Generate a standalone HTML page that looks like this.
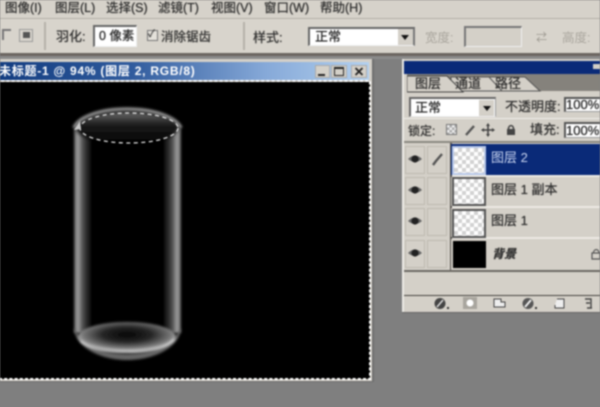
<!DOCTYPE html>
<html><head><meta charset="utf-8">
<style>
html,body{margin:0;padding:0}
body{width:600px;height:407px;overflow:hidden;position:relative;background:#7f7f7f;font-family:"Liberation Sans","Noto Sans CJK SC",sans-serif;}
#w{position:absolute;left:0;top:0;width:600px;height:407px;filter:blur(.7px);overflow:hidden}
.a{position:absolute}
.t{position:absolute;white-space:nowrap;color:#2e2e2e;font-size:12.5px;line-height:14px;text-shadow:0 0 1px rgba(0,0,0,.55)}
.in{position:absolute;background:#fff;border:1px solid #555;border-right-color:#ddd;border-bottom-color:#ddd;box-sizing:border-box}
.thumb{position:absolute;left:452px;width:34px;height:29px;box-sizing:border-box;border:2px solid #555;background-color:#fff;background-image:linear-gradient(45deg,#d2d2d2 25%,transparent 25%,transparent 75%,#d2d2d2 75%),linear-gradient(45deg,#d2d2d2 25%,transparent 25%,transparent 75%,#d2d2d2 75%);background-size:8px 8px;background-position:0 0,4px 4px}
.cell{position:absolute;width:20px;height:28px;background:#d4d0c8;border:1px solid #bdb9b0;box-sizing:border-box}
.row{position:absolute;left:451px;width:149px;background:#d4d0c8}
</style></head><body><div id="w">
<!-- top -->
<div class="a" style="left:0;top:0;width:600px;height:18px;background:#d6d2ca"></div>
<div class="a" style="left:0;top:18px;width:600px;height:1px;background:#b5b1a9"></div>
<div class="a" style="left:0;top:19px;width:600px;height:34px;background:#d8d4cc"></div>
<div class="a" style="left:0;top:53px;width:600px;height:3px;background:#6b6560"></div>
<div class="a" style="left:0;top:56px;width:600px;height:3px;background:#8a8a8a"></div>

<div class="t" style="left:5px;top:1px">图像(I)</div>
<div class="t" style="left:55px;top:1px">图层(L)</div>
<div class="t" style="left:106px;top:1px">选择(S)</div>
<div class="t" style="left:158px;top:1px">滤镜(T)</div>
<div class="t" style="left:211px;top:1px">视图(V)</div>
<div class="t" style="left:264px;top:1px">窗口(W)</div>
<div class="t" style="left:320px;top:1px">帮助(H)</div>

<!-- toolbar -->
<div class="a" style="left:2px;top:29px;width:9px;height:11px;border-left:2px solid #777;border-top:2px solid #777;box-sizing:border-box"></div>
<div class="a" style="left:19px;top:29px;width:14px;height:13px;border:1px solid #999;box-sizing:border-box"></div>
<div class="a" style="left:23px;top:32px;width:7px;height:6px;background:#555"></div>
<div class="a" style="left:44px;top:22px;width:2px;height:28px;background:#b5b1a9"></div>
<div class="t" style="left:56px;top:30px;font-size:13px">羽化:</div>
<div class="in" style="left:93px;top:25px;width:44px;height:22px;border-width:2px 1px 1px 2px;border-color:#666 #eee #eee #666"></div>
<div class="t" style="left:99px;top:29px;color:#222">0 像素</div>
<div class="a" style="left:147px;top:30px;width:11px;height:11px;border:1px solid #777;background:#e4e1da;box-sizing:border-box"></div>
<div class="t" style="left:148px;top:28px;font-size:10px;color:#333">✓</div>
<div class="t" style="left:161px;top:30px">消除锯齿</div>
<div class="a" style="left:243px;top:22px;width:2px;height:28px;background:#b5b1a9"></div>
<div class="t" style="left:253px;top:31px;font-size:13px">样式:</div>
<div class="in" style="left:308px;top:27px;width:107px;height:19px;border-width:2px 2px 1px 2px;border-color:#666 #777 #eee #666"></div>
<div class="t" style="left:315px;top:30px;color:#222;font-size:13px">正常</div>
<div class="a" style="left:398px;top:29px;width:15px;height:16px;background:#d4d0c8"></div>
<div class="a" style="left:401px;top:35px;width:0;height:0;border:4px solid transparent;border-top:5px solid #111;border-bottom:0"></div>
<div class="t" style="left:425px;top:31px;color:#aaa69e;text-shadow:none">宽度:</div>
<div class="a" style="left:464px;top:26px;width:58px;height:21px;box-sizing:border-box;border:1px solid #999;border-left:2px solid #777;border-top:2px solid #777;border-right-color:#eee;border-bottom-color:#eee;background:#d4d0c8"></div>
<div class="t" style="left:536px;top:31px;color:#9a968e;font-size:11px;text-shadow:none">⇄</div>
<div class="t" style="left:562px;top:31px;color:#aaa69e;text-shadow:none">高度:</div>

<!-- document window -->
<div class="a" style="left:0;top:59px;width:372px;height:321px;background:#d4d0c8"></div>
<div class="a" style="left:372px;top:59px;width:2px;height:323px;background:#6f6f6f"></div>
<div class="a" style="left:0;top:380px;width:374px;height:2px;background:#6f6f6f"></div>
<div class="a" style="left:0;top:62px;width:369px;height:19px;background:linear-gradient(90deg,#123c80 0,#2f5a9c 35%,#86a9d8 72%,#b3d0ee 100%)"></div>
<div class="t" style="left:-1px;top:64px;color:#fff;font-size:12px;font-weight:bold;letter-spacing:.75px;text-shadow:none">未标题-1 @ 94% (图层 2, RGB/8)</div>
<div class="a" style="left:315px;top:65px;width:15px;height:13px;background:#d4d0c8;border:1px solid #aaa;box-sizing:border-box"></div>
<div class="a" style="left:318px;top:74px;width:7px;height:2px;background:#222"></div>
<div class="a" style="left:331px;top:65px;width:16px;height:13px;background:#d4d0c8;border:1px solid #aaa;box-sizing:border-box"></div>
<div class="a" style="left:334px;top:67px;width:10px;height:9px;border:1px solid #222;border-top-width:2px;box-sizing:border-box"></div>
<div class="a" style="left:351px;top:65px;width:16px;height:13px;background:#d4d0c8;border:1px solid #aaa;box-sizing:border-box"></div>
<svg class="a" style="left:354px;top:67px" width="10" height="9"><path d="M1.5 1 L8.5 8 M8.5 1 L1.5 8" stroke="#222" stroke-width="1.8"/></svg>

<!-- canvas -->
<svg class="a" style="left:0;top:80px" width="372" height="301" viewBox="0 80 372 301">
<defs>
<filter id="b1" x="-50%" y="-50%" width="200%" height="200%"><feGaussianBlur stdDeviation="1"/></filter>
<filter id="b2" x="-50%" y="-50%" width="200%" height="200%"><feGaussianBlur stdDeviation="2.5"/></filter>
<filter id="b3" x="-50%" y="-50%" width="200%" height="200%"><feGaussianBlur stdDeviation="1.6"/></filter>
<radialGradient id="bot" cx=".5" cy=".42" r=".56"><stop offset="0" stop-color="#050505"/><stop offset=".45" stop-color="#262626"/><stop offset=".8" stop-color="#777"/><stop offset="1" stop-color="#c8c8c8"/></radialGradient>
<linearGradient id="wallL" x1="0" x2="1"><stop offset="0" stop-color="#555"/><stop offset=".2" stop-color="#a0a0a0"/><stop offset=".5" stop-color="#4a4a4a"/><stop offset="1" stop-color="#000"/></linearGradient>
<linearGradient id="wallR" x1="1" x2="0"><stop offset="0" stop-color="#555"/><stop offset=".2" stop-color="#a0a0a0"/><stop offset=".5" stop-color="#4a4a4a"/><stop offset="1" stop-color="#000"/></linearGradient>
<linearGradient id="inner" x1="0" x2="0" y1="0" y2="1"><stop offset="0" stop-color="#6a6a6a"/><stop offset=".4" stop-color="#1c1c1c"/><stop offset="1" stop-color="#000"/></linearGradient>
</defs>
<rect x="0" y="80" width="372" height="301" fill="#d4d0c8"/>
<rect x="0" y="82" width="370" height="297" fill="#000"/>
<!-- walls -->
<rect x="74" y="128" width="18" height="205" fill="url(#wallL)" filter="url(#b1)"/>
<rect x="163" y="128" width="18" height="205" fill="url(#wallR)" filter="url(#b1)"/>
<!-- bottom -->
<path d="M74 328 C75 347 100 360 127 360 C155 360 180 347 181 328 L177 334 C170 347 150 354 127 354 C104 354 84 347 78 334 Z" fill="#666" filter="url(#b1)"/>
<ellipse cx="127" cy="337" rx="49" ry="15" fill="url(#bot)" filter="url(#b1)"/>
<path d="M81 341 C90 350 108 352 127 352 C148 352 166 349 174 339" stroke="#ddd" stroke-width="1.5" fill="none" filter="url(#b1)"/>
<!-- top -->
<ellipse cx="127" cy="128" rx="51" ry="16" fill="url(#inner)" filter="url(#b3)"/>
<path d="M74 128 C78 117 100 109 127 109 C154 109 176 117 181 128" stroke="#8a8a8a" stroke-width="3.5" fill="none" filter="url(#b1)"/>
<ellipse cx="129" cy="128" rx="49" ry="15" fill="none" stroke="#e0e0e0" stroke-width="1.3" stroke-dasharray="4 3.5"/>
<path d="M74 130 L80 121 L81 129 Z" fill="#c8c8c8"/>
<!-- marching ants -->
<rect x="-4" y="81" width="374" height="298" fill="none" stroke="#fff" stroke-width="2" stroke-dasharray="3 2.2"/>
</svg>

<!-- panel -->
<div class="a" style="left:402px;top:59px;width:198px;height:253px;background:#d4d0c8"></div>
<div class="a" style="left:402px;top:59px;width:2px;height:254px;background:#ecebe6"></div>
<div class="a" style="left:404px;top:61px;width:196px;height:13px;background:#0a2a78"></div>
<div class="a" style="left:593px;top:64px;width:7px;height:5px;background:#d4d0c8"></div>
<div class="a" style="left:404px;top:74px;width:196px;height:17px;background:#85827c"></div>
<div class="a" style="left:404px;top:74px;width:3px;height:17px;background:#d4d0c8"></div>
<svg class="a" style="left:407px;top:75px" width="135" height="18">
<path d="M82 16 V2 H118 L133 16 Z" fill="#d4d0c8" stroke="#555"/>
<path d="M44 16 V2 H82 L95 16 Z" fill="#d4d0c8" stroke="#555"/>
<path d="M0 17 V1 H40 L56 17 Z" fill="#d4d0c8" stroke="#444"/>
</svg>
<div class="t" style="left:415px;top:77px;font-size:13px">图层</div>
<div class="t" style="left:455px;top:77px;font-size:13px">通道</div>
<div class="t" style="left:495px;top:77px;font-size:13px">路径</div>

<div class="in" style="left:409px;top:97px;width:87px;height:20px;border-width:2px 1px 1px 2px;border-color:#666 #999 #eee #666"></div>
<div class="t" style="left:415px;top:101px;color:#222;font-size:13px">正常</div>
<div class="a" style="left:479px;top:100px;width:15px;height:16px;background:#d4d0c8"></div>
<div class="a" style="left:483px;top:106px;width:0;height:0;border:4px solid transparent;border-top:5px solid #111;border-bottom:0"></div>
<div class="t" style="left:505px;top:100px;font-size:13px">不透明度:</div>
<div class="in" style="left:564px;top:97px;width:40px;height:15px;border:2px solid #555;border-right:0;border-bottom:1px solid #999"></div>
<div class="t" style="left:566px;top:98px;font-size:13px;color:#222">100%</div>
<div class="a" style="left:404px;top:118px;width:196px;height:1px;background:#efeee9"></div>

<div class="t" style="left:408px;top:124px;font-size:12px">锁定:</div>
<div class="a" style="left:446px;top:124px;width:11px;height:11px;box-sizing:border-box;border:1px solid #777;background:repeating-conic-gradient(#aaa 0 25%,#eee 0 50%) 0 0/5px 5px"></div>
<svg class="a" style="left:464px;top:123px" width="50" height="14"><path d="M2 12 L10 3" stroke="#555" stroke-width="2.4"/><path d="M24 1 V13 M18 7 H30" stroke="#444" stroke-width="1.6"/><path d="M24 0 l-2 3 h4 z M24 14 l-2 -3 h4 z M17 7 l3 -2 v4 z M31 7 l-3 -2 v4 z" fill="#444"/></svg>
<svg class="a" style="left:505px;top:123px" width="12" height="14"><path d="M2 12 V6 H10 V12 Z" fill="#444"/><path d="M3.5 6 C3.5 1.5 8.5 1.5 8.5 6" stroke="#444" stroke-width="1.6" fill="none"/></svg>
<div class="t" style="left:530px;top:123px;font-size:13px">填充:</div>
<div class="in" style="left:564px;top:122px;width:40px;height:16px;border:2px solid #555;border-right:0;border-bottom:1px solid #999"></div>
<div class="t" style="left:566px;top:124px;font-size:13px;color:#222">100%</div>
<div class="a" style="left:404px;top:141px;width:196px;height:2px;background:#8a8780"></div>

<!-- layers -->
<div class="a" style="left:404px;top:143px;width:47px;height:128px;background:#d4d0c8"></div>
<div class="a" style="left:450px;top:143px;width:2px;height:128px;background:#55524e"></div>
<div class="row" style="top:144px;height:31px;background:#0a2a78"></div>
<div class="row" style="top:177px;height:29px"></div>
<div class="row" style="top:208px;height:29px"></div>
<div class="row" style="top:239px;height:31px"></div>
<div class="a" style="left:452px;top:175px;width:148px;height:2px;background:#eceae4"></div>
<div class="a" style="left:452px;top:206px;width:148px;height:2px;background:#eceae4"></div>
<div class="a" style="left:452px;top:237px;width:148px;height:2px;background:#eceae4"></div>
<div class="a" style="left:404px;top:270px;width:196px;height:2px;background:#6b6863"></div>

<div class="thumb" style="top:146px;border:2px solid #b8c8e8"></div>
<div class="thumb" style="top:177px"></div>
<div class="thumb" style="top:209px"></div>
<div class="a" style="left:453px;top:241px;width:33px;height:27px;background:#000"></div>

<div class="cell" style="left:405px;top:146px"></div><div class="cell" style="left:427px;top:146px"></div>
<div class="cell" style="left:405px;top:177px"></div><div class="cell" style="left:427px;top:177px"></div>
<div class="cell" style="left:405px;top:208px"></div><div class="cell" style="left:427px;top:208px"></div>
<div class="cell" style="left:405px;top:240px"></div><div class="cell" style="left:427px;top:240px"></div>
<svg class="a" style="left:405px;top:146px" width="20" height="124">
<path d="M3 13 Q10 6 17 13 Q10 19 3 13Z" fill="#666"/><circle cx="10" cy="13" r="3.6" fill="#222"/>
<path d="M3 44 Q10 37 17 44 Q10 50 3 44Z" fill="#666"/><circle cx="10" cy="44" r="3.6" fill="#222"/>
<path d="M3 75 Q10 68 17 75 Q10 81 3 75Z" fill="#666"/><circle cx="10" cy="75" r="3.6" fill="#222"/>
<path d="M3 107 Q10 100 17 107 Q10 113 3 107Z" fill="#666"/><circle cx="10" cy="107" r="3.6" fill="#222"/>
</svg>
<svg class="a" style="left:431px;top:152px" width="14" height="15"><path d="M2 13 L5 9 L11 2" stroke="#555" stroke-width="2.4" fill="none"/></svg>

<div class="t" style="left:491px;top:151px;color:#c8d4f0;font-size:13px;text-shadow:none">图层 2</div>
<div class="t" style="left:491px;top:183px;font-size:13px">图层 1 副本</div>
<div class="t" style="left:491px;top:214px;font-size:13px">图层 1</div>
<div class="t" style="left:492px;top:247px;font-size:12px;font-style:italic;font-weight:bold">背景</div>
<svg class="a" style="left:591px;top:247px" width="9" height="14"><path d="M1 12 V6 H9 V12 Z" fill="none" stroke="#555" stroke-width="1.2"/><path d="M2.5 6 C2.5 1.5 8 1.5 8 6" stroke="#555" stroke-width="1.2" fill="none"/></svg>

<!-- footer -->
<div class="a" style="left:404px;top:295px;width:196px;height:1px;background:#44423e"></div>
<div class="a" style="left:402px;top:312px;width:198px;height:1px;background:#666"></div>
<svg class="a" style="left:430px;top:296px" width="170" height="16">
<circle cx="10" cy="7.5" r="5.5" fill="#444"/><path d="M7 11 L13 4" stroke="#ddd" stroke-width="1.5"/><rect x="17" y="11" width="2" height="2" fill="#333"/>
<rect x="33" y="1" width="14" height="12" fill="#a8a59e"/><circle cx="40" cy="7" r="3.5" fill="#fff"/>
<path d="M64 3 H71 V6 H75 V11 H64 Z" fill="#eee" stroke="#444"/>
<circle cx="98" cy="7.5" r="5.5" fill="#555"/><path d="M95 11 L101 4" stroke="#eee" stroke-width="2"/><rect x="105" y="11" width="2" height="2" fill="#333"/>
<path d="M127 3 H134 V12 H125 V9" fill="#eee" stroke="#444"/>
<path d="M155 3 H161 V12 M156 7 H160 M157 12 H162" stroke="#444" fill="none" stroke-width="1.4"/>
</svg>
</div></body></html>
